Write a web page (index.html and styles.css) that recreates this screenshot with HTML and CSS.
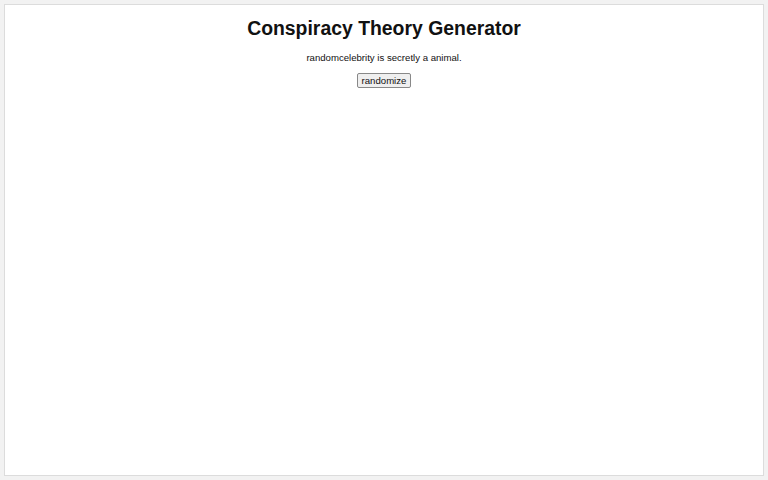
FILE: index.html
```html
<!DOCTYPE html>
<html lang="en">
<head>
    <meta charset="UTF-8">
    <meta name="viewport" content="width=device-width, initial-scale=1.0">
    <title>Conspiracy Theory Generator</title>
    <link rel="stylesheet" href="styles.css">
</head>
<body>
    <div class="container">
        <h1>Conspiracy Theory Generator</h1>

        <p id="theory">randomcelebrity is secretly a animal.</p>

        <button id="randomizeBtn">randomize</button>
    </div>
</body>
</html>
```

FILE: styles.css
```css
body {
    font-family: "Liberation Sans", Arial, sans-serif;
    margin: 0;
    padding: 4px;
    background-color: #f2f2f2;
}

.container {
    height: 472px;
    padding-top: 12px;
    box-sizing: border-box;
    background-color: white;
    border: 1px solid #dcdcdc;
    text-align: center;
}

h1 {
    font-size: 19.4px;
    margin: 0 0 12px;
    color: #111;
}

p {
    font-size: 9.6px;
    margin: 0 0 7px;
    color: #111;
}

button {
    font-family: "Liberation Sans", Arial, sans-serif;
    font-size: 9.6px;
    padding: 1px 4px;
    color: #111;
    background-color: #efefef;
    border: 1px solid #888;
    border-radius: 2px;
}
```
